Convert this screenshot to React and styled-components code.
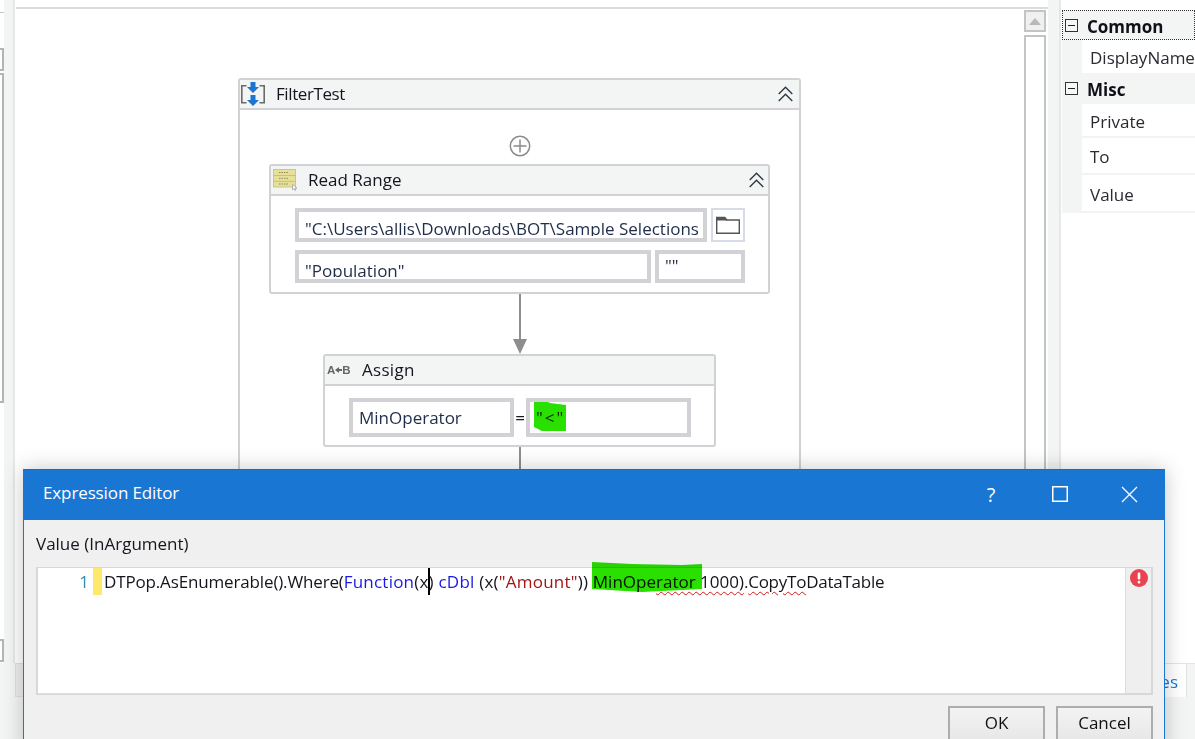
import React from "react";
import styled, { createGlobalStyle } from "styled-components";

const Global = createGlobalStyle`
  html, body { margin: 0; padding: 0; background: #fff; }
  * { box-sizing: border-box; }
`;
const FONT = `"Open Sans", "Noto Sans", "Liberation Sans", sans-serif`;
const LINE = "#d2d2d6";
const PANEL = "#f3f5f5";

const Page = styled.div`
  position: relative; width: 1195px; height: 739px; overflow: hidden;
  font-family: ${FONT}; font-size: 17px; color: #1a1a1a; background: #fff;
  display: flex; flex-direction: column;
`;
const Main = styled.div`display: flex; height: 663px;`;
const LeftEdge = styled.div`
  width: 4px; display: flex; flex-direction: column; background: #fff;
`;
const EdgeRule = styled.div`height: 1px; margin: 12px 0 35px; background: #c4c4c4;`;
const EdgeBox = styled.div`
  height: ${p => p.$h}px; margin-bottom: ${p => p.$mb}px;
  border: 2px solid #b4b4b4; border-left: 0; background: #fff;
`;
const LeftGutter = styled.div`width: 11px; background: ${PANEL}; border-right: 2px solid #e6e8e8;`;
const Center = styled.div`width: 1033px; display: flex; flex-direction: column;`;
const TopCap = styled.div`height: 9px; margin-left: 1px; background: #fff; border-bottom: 2px solid #dcdcdc;`;
const CenterBody = styled.div`flex: 1; display: flex; min-height: 0;`;
const Canvas = styled.div`
  width: 1009px; overflow: hidden; background: #fff;
  padding-top: 69px; display: flex; flex-direction: column; align-items: center;
`;
const ScrollBar = styled.div`
  width: 22px; padding-top: 1px; display: flex; flex-direction: column; gap: 3px; margin-right: 2px;
`;
const ScrollUp = styled.div`
  height: 22px; border: 2px solid #c4c4c4; background: #f0f0f0;
  display: flex; align-items: center; justify-content: center;
`;
const ScrollTrack = styled.div`flex: 1; border: 2px solid #c4c4c4; background: #fff;`;
const RightGutter = styled.div`width: 13px; background: ${PANEL}; border-right: 2px solid #e6e8e8;`;

/* Properties */
const Props = styled.div`flex: 1; background: #fff; padding-top: 10px; overflow: hidden; white-space: nowrap;`;
const GroupRow = styled.div`
  height: ${p => p.$h}px; display: flex; align-items: center; background: ${PANEL};
  font-weight: 700; font-size: 17px; color: #101018; gap: 9px; padding-left: 3px; margin-left: 1px;
  outline: ${p => (p.$focus ? "1px dotted #333" : "none")}; outline-offset: -1px;
`;
const GroupLabel = styled.span`padding-top: ${p => p.$pt}px;`;
const Toggle = styled.span`
  width: 13px; height: 13px; border: 1px solid #333; background: #f7f7f7; flex: none;
  display: flex; align-items: center; justify-content: center;
  &::after { content: ""; width: 7px; height: 1px; background: #222; }
`;
const PropRow = styled.div`
  display: flex; height: ${p => p.$h}px; margin-left: 1px; font-size: 17px; color: #2a2a32;
`;
const PropIndent = styled.div`width: 20px; flex: none; background: ${PANEL};`;
const PropLabel = styled.div`
  flex: 1; padding: 2px 0 0 8px; display: flex; align-items: center;
  border-bottom: ${p => (p.$sep ? "2px solid #f2f4f4" : "0")};
`;

/* Workflow */
const Activity = styled.div`
  width: ${p => p.$w}px; flex: none; border: 2px solid ${LINE}; border-radius: 3px; background: #fff;
`;
const ActivityHead = styled.div`
  height: ${p => p.$h}px; background: ${PANEL}; border-bottom: 2px solid ${LINE};
  display: flex; align-items: center; padding: 0 ${p => p.$pr || 5}px 0 ${p => p.$pl}px;
`;
const HeadIcon = styled.span`width: ${p => p.$w}px; flex: none; display: flex; align-items: center;`;
const HeadTitle = styled.span`
  flex: 1; font-size: 17px; color: #15151f; padding-bottom: 2px; letter-spacing: ${p => p.$ls || 0}px;
`;
const SeqBody = styled.div`display: flex; flex-direction: column; align-items: center; padding-top: 25px; height: 600px;`;
const AddBtn = styled.div`height: 22px; margin-bottom: 7px;`;
const Fields = styled.div`
  padding: ${p => p.$pad}; display: flex; flex-direction: column; gap: 8px;
`;
const FieldRow = styled.div`display: flex; gap: ${p => p.$gap || 4}px; align-items: center;`;
const Field = styled.div`
  width: ${p => p.$w}px; height: ${p => p.$h}px; flex: none; border: 4px solid ${LINE}; background: #fff;
  font-size: 17px; color: #1f2d48; padding-left: 6px; overflow: hidden; white-space: nowrap;
  line-height: ${p => p.$lh}px;
`;
const FieldClip = styled.div`height: ${p => p.$h}px; overflow: hidden;`;
const FolderBtn = styled.div`
  width: 34px; height: 34px; flex: none; border: 2px solid #d5dce8; display: flex;
  align-items: center; justify-content: center; background: #fff;
`;
const Connector = styled.div`
  display: flex; flex-direction: column; align-items: center; height: ${p => p.$h}px; flex: none;
`;
const ConnLine = styled.div`flex: 1; width: 2px; background: #8e8e8e;`;
const ConnHead = styled.div`
  width: 0; height: 0; border-left: 7px solid transparent; border-right: 7px solid transparent;
  border-top: 15px solid #8e8e8e;
`;
const AssignRow = styled.div`display: flex; align-items: flex-start; padding: 12px 0 0 24px; height: 59px;`;
const Equals = styled.div`width: 12px; text-align: center; font-size: 17px; line-height: 39px;`;
const HighlightWrap = styled.span`position: relative; display: inline-block; letter-spacing: ${p => p.$ls || 0}px;`;
const Scribble = styled.svg`
  position: absolute; left: ${p => p.$l}px; top: ${p => p.$t}px; overflow: visible;
  mix-blend-mode: multiply; pointer-events: none;
`;

/* Bottom */
const Bottom = styled.div`flex: 1; background: ${PANEL}; display: flex; align-items: flex-start;`;
const BottomTab = styled.div`margin-left: 15px; width: 30px; height: 34px; background: #eeeeee; border: 1px solid #e0e0e0;`;
const BottomSpacer = styled.div`flex: 1;`;
const FileTab = styled.div`
  width: 30px; height: 34px; border-top: 1px solid #e4e4e4; color: #1b76d2; font-size: 17px;
  & > span {
    display: block; width: 22px; height: 33px; background: #fff; border-right: 1px solid #e4e4e4;
    direction: rtl; padding: 6px 8px 0 0; white-space: nowrap;
  }
`;

/* Modal */
const Modal = styled.div`
  position: absolute; left: 23px; top: 469px; width: 1142px; height: 290px;
  background: #f0f0f0; border: 1px solid #1976d2; border-top: 0;
  box-shadow: 0 0 20px rgba(0,0,0,.22);
  display: flex; flex-direction: column;
`;
const ModalBar = styled.div`
  height: 51px; flex: none; background: #1976d2; color: #fff; display: flex; align-items: center;
  padding: 0 0 2px 19px; border-top: 1px solid #1a6cc0;
`;
const ModalTitle = styled.div`flex: 1; font-size: 17px; letter-spacing: -0.12px; padding-bottom: 3px;`;
const BarBtn = styled.div`
  width: 70px; height: 48px; display: flex; align-items: center; justify-content: center; font-size: 20px;
  padding-left: ${p => p.$pl || 0}px;
`;
const ModalBody = styled.div`padding: 12px 11px 0 12px; flex: 1; display: flex; flex-direction: column;`;
const ValueLabel = styled.div`font-size: 17px; color: #161620; height: 35px; line-height: 24px;`;
const Editor = styled.div`
  height: 128px; display: flex; border: 2px solid #d8d8d8; border-top-width: 1px; background: #efefef;
`;
const EditorText = styled.div`flex: 1; background: #fff; display: flex; align-items: flex-start; border-right: 1px solid #dcdcdc; box-shadow: 0 1px 0 #ddd;`;
const LineNo = styled.div`width: 55px; height: 27px; line-height: 27px; text-align: right; padding-right: 4px; color: #2b91af; font-size: 17px;`;
const ChangeBar = styled.div`width: 9px; height: 27px; background: #ffe96a; flex: none;`;
const Code = styled.div`
  padding-left: 2px; height: 27px; line-height: 27px; font-size: 17px; white-space: nowrap; color: #14141c;
`;
const CodeRun = styled.span`letter-spacing: ${p => p.$ls}px;`;
const Kw = styled.span`color: #1a1ae6;`;
const Str = styled.span`color: #a31515;`;
const Wavy = styled.span`
  text-decoration: underline wavy #d81818; text-decoration-thickness: 1px; text-underline-offset: 3px;
`;
const Caret = styled.span`
  display: inline-block; width: 2px; height: 27px; margin: 0 -1px; background: #000; vertical-align: top;
`;
const ErrorGutter = styled.div`width: 25px; flex: none; display: flex; justify-content: center; padding-top: 1px;`;
const Buttons = styled.div`display: flex; justify-content: flex-end; gap: 11px; margin-top: 11px;`;
const Button = styled.div`
  width: 97px; height: 40px; border: 2px solid #adadad;
  background: linear-gradient(#f3f3f3, #e6e6e6); text-align: center; line-height: 29px; font-size: 17px; color: #111;
`;

const Chevrons = () => (
  <svg width="15" height="16" viewBox="0 0 15 16" fill="none" stroke="#303846" strokeWidth="1.4">
    <path d="M.7 8 7.500 1.200 14.300 8" /><path d="M.7 15 7.500 8.200 14.300 15" />
  </svg>
);
const SeqIcon = () => (
  <svg width="24" height="24" viewBox="0 0 24 24" fill="none">
    <path d="M5.500 3.800H.8v17h4.700M18.500 3.800h4.700v17h-4.700" stroke="#6a6a6a" strokeWidth="1.6" />
    <path d="M9.500 0h5v5h3.500L12 11 6 5h3.500z" fill="#1b76d2" />
    <path d="M9.500 13h5v5h3.500l-6 6-6-6h3.500z" fill="#1b76d2" />
  </svg>
);
const TableIcon = () => (
  <svg width="26" height="22" viewBox="0 0 26 22">
    <rect x=".5" y=".5" width="22" height="17.500" fill="#e6e09a" stroke="#cfc77c" />
    <path d="M.5 6.500h22M.5 12.300h22" stroke="#c9c178" />
    <path d="M6 3.500h10M6 9.300h10M6 15h10" stroke="#8f8a55" strokeDasharray="1.500 1" />
    <path d="M19.500 15.500v5.500l1.500-1.500 1 2 1-.5-1-2h2z" fill="#fff" stroke="#999" strokeWidth=".7" />
  </svg>
);
const AssignIconWrap = styled.span`
  display: flex; align-items: center; font-size: 11.5px; font-weight: 800; color: #666; font-family: "Liberation Sans", sans-serif;
`;
const AssignIcon = () => (
  <AssignIconWrap>A
    <svg width="7" height="8" viewBox="0 0 7 8"><path d="M0 4l4-3v2h3v2H4v2z" fill="#666" /></svg>
    B</AssignIconWrap>
);
const Folder = () => (
  <svg width="24" height="18" viewBox="0 0 24 18" fill="none">
    <path d="M.7 17.300V1.500h8l2 2.500h12.600v13.300z" stroke="#555" strokeWidth="1.400" />
    <path d="M0 1h9l2.500 3.500H0z" fill="#555" />
  </svg>
);
const Plus = () => (
  <svg width="22" height="22" viewBox="0 0 22 22" fill="none" stroke="#8c8c8c" strokeWidth="1.500">
    <circle cx="11" cy="11" r="9.700" /><path d="M11 4.500v13M4.500 11h13" />
  </svg>
);

export default function App() {
  return (
    <Page>
      <Global />
      <Main>
        <LeftEdge>
          <EdgeRule />
          <EdgeBox $h={23} $mb={2} />
          <EdgeBox $h={330} $mb={236} />
          <EdgeBox $h={23} $mb={0} />
        </LeftEdge>
        <LeftGutter />
        <Center>
          <TopCap />
          <CenterBody>
            <Canvas>
              <Activity $w={563}>
                <ActivityHead $h={30} $pl={1} $pr={6}>
                  <HeadIcon $w={35}><SeqIcon /></HeadIcon>
                  <HeadTitle $ls={-0.4}>FilterTest</HeadTitle>
                  <Chevrons />
                </ActivityHead>
                <SeqBody>
                  <AddBtn><Plus /></AddBtn>
                  <Activity $w={501}>
                    <ActivityHead $h={30} $pl={2} $pr={4}>
                      <HeadIcon $w={35}><TableIcon /></HeadIcon>
                      <HeadTitle>Read Range</HeadTitle>
                      <Chevrons />
                    </ActivityHead>
                    <Fields $pad="12px 24px 9px 24px">
                      <FieldRow>
                        <Field $w={412} $h={34} $lh={34}>
                          <FieldClip $h={24}>"C:\Users\allis\Downloads\BOT\Sample Selections</FieldClip>
                        </Field>
                        <FolderBtn><Folder /></FolderBtn>
                      </FieldRow>
                      <FieldRow>
                        <Field $w={356} $h={33} $lh={34}>
                          <FieldClip $h={23}>"Population"</FieldClip>
                        </Field>
                        <Field $w={90} $h={33} $lh={24}>""</Field>
                      </FieldRow>
                    </Fields>
                  </Activity>
                  <Connector $h={60}><ConnLine /><ConnHead /></Connector>
                  <Activity $w={393}>
                    <ActivityHead $h={30} $pl={2}>
                      <HeadIcon $w={35}><AssignIcon /></HeadIcon>
                      <HeadTitle $ls={0.3}>Assign</HeadTitle>
                    </ActivityHead>
                    <AssignRow>
                      <Field $w={165} $h={39} $lh={31}>MinOperator</Field>
                      <Equals>=</Equals>
                      <Field $w={165} $h={39} $lh={31}>
                        <HighlightWrap $ls={2}>
                          "&lt;"
                          <Scribble $l={-2} $t={-5} width="32" height="34" viewBox="0 0 32 34">
                            <path d="M0 0l8 2 8 4 16 2v26H8l-8-4z" fill="#29e000" />
                          </Scribble>
                        </HighlightWrap>
                      </Field>
                    </AssignRow>
                  </Activity>
                  <Connector $h={40}><ConnLine /></Connector>
                </SeqBody>
              </Activity>
            </Canvas>
            <ScrollBar>
              <ScrollUp>
                <svg width="12" height="7" viewBox="0 0 12 7"><path d="M6 0l6 7H0z" fill="#b8b8b8" /></svg>
              </ScrollUp>
              <ScrollTrack />
            </ScrollBar>
          </CenterBody>
        </Center>
        <RightGutter />
        <Props>
          <GroupRow $h={30} $focus><Toggle /><GroupLabel $pt={3}>Common</GroupLabel></GroupRow>
          <PropRow $h={33}><PropIndent /><PropLabel>DisplayName</PropLabel></PropRow>
          <GroupRow $h={31}><Toggle /><GroupLabel $pt={2}>Misc</GroupLabel></GroupRow>
          <PropRow $h={34}><PropIndent /><PropLabel $sep>Private</PropLabel></PropRow>
          <PropRow $h={37}><PropIndent /><PropLabel $sep>To</PropLabel></PropRow>
          <PropRow $h={38}><PropIndent /><PropLabel $sep>Value</PropLabel></PropRow>
        </Props>
      </Main>
      <Bottom>
        <BottomTab />
        <BottomSpacer />
        <FileTab><span>es</span></FileTab>
      </Bottom>
      <Modal>
        <ModalBar>
          <ModalTitle>Expression Editor</ModalTitle>
          <BarBtn $pl={4}>?</BarBtn>
          <BarBtn $pl={2}>
            <svg width="16" height="16" viewBox="0 0 16 16" fill="none" stroke="#fff" strokeWidth="1.500"><rect x=".75" y=".75" width="14.500" height="14.500" /></svg>
          </BarBtn>
          <BarBtn>
            <svg width="17" height="17" viewBox="0 0 17 17" fill="none" stroke="#fff" strokeWidth="1.300"><path d="M1 1l15 15M16 1 1 16" /></svg>
          </BarBtn>
        </ModalBar>
        <ModalBody>
          <ValueLabel>Value (InArgument)</ValueLabel>
          <Editor>
            <EditorText>
              <LineNo>1</LineNo>
              <ChangeBar />
              <Code>
                <CodeRun $ls={-0.15}>DTPop.AsEnumerable().Where(</CodeRun>
                <CodeRun $ls={0.22}>
                  <Kw>Function</Kw>(x<Caret />) <Kw>cDbl</Kw> (x(<Str>"Amount"</Str>)){" "}
                </CodeRun>
                <HighlightWrap>
                  MinOpe<Wavy>rator 1000)</Wavy>
                  <Scribble $l={-1} $t={-6} width="110" height="30" viewBox="0 0 110 30">
                    <path d="M0 0 40 2 90 3 110 2V27L90 28 50 30 0 27z" fill="#29e000" />
                  </Scribble>
                </HighlightWrap>
                <CodeRun $ls={-0.25}>.<Wavy>CopyTo</Wavy>DataTable</CodeRun>
              </Code>
            </EditorText>
            <ErrorGutter>
              <svg width="18" height="18" viewBox="0 0 18 18">
                <circle cx="9" cy="9" r="9" fill="#e9434f" />
                <rect x="7.700" y="3.500" width="2.600" height="7" rx="1" fill="#fff" />
                <rect x="7.700" y="11.800" width="2.600" height="2.600" rx="1" fill="#fff" />
              </svg>
            </ErrorGutter>
          </Editor>
          <Buttons>
            <Button>OK</Button>
            <Button>Cancel</Button>
          </Buttons>
        </ModalBody>
      </Modal>
    </Page>
  );
}
